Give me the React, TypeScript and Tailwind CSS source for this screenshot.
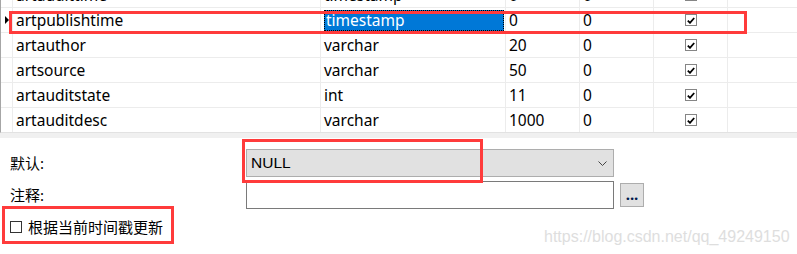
import React from 'react';

type Row = { name: string; type: string; len: string; dec: string; selected?: boolean };

const rows: Row[] = [
  { name: 'artaudittime', type: 'timestamp', len: '0', dec: '0' },
  { name: 'artpublishtime', type: 'timestamp', len: '0', dec: '0', selected: true },
  { name: 'artauthor', type: 'varchar', len: '20', dec: '0' },
  { name: 'artsource', type: 'varchar', len: '50', dec: '0' },
  { name: 'artauditstate', type: 'int', len: '11', dec: '0' },
  { name: 'artauditdesc', type: 'varchar', len: '1000', dec: '0' },
];

const cell = 'h-[25px] border-r border-b border-[#ececec] flex items-center pl-[3px] pt-[2px] overflow-hidden whitespace-nowrap';

const CheckCell = () => (
  <div className="w-[12px] h-[12px] border border-[#858585] bg-white flex items-center justify-center">
    <svg width="8" height="7" viewBox="0 0 8 7">
      <path d="M0.8 3.6 L3 5.8 L7.2 1" stroke="#000" strokeWidth="1.8" fill="none" />
    </svg>
  </div>
);

const App = () => {
  return (
    <div
      className="relative w-[797px] h-[254px] bg-white overflow-hidden text-black"
      style={{ fontFamily: '"Noto Sans", "Noto Sans CJK SC", sans-serif' }}
    >
      {/* field grid */}
      <div className="h-[133px] overflow-hidden border-l border-[#a6a6a6] border-b border-b-[#e2e2e2]">
        <div className="-mt-[17px] grid grid-cols-[12px_308px_185px_74px_74px_74px_1fr] text-[15.5px]">
          {rows.map((r) => (
            <React.Fragment key={r.name}>
              <div className="h-[25px] border-r border-b border-[#ececec] flex items-center pl-[4px]">
                {r.selected && (
                  <svg width="4" height="8" viewBox="0 0 4 8">
                    <path d="M0 0 L4 4 L0 8 Z" fill="#000" />
                  </svg>
                )}
              </div>
              <div className={cell}>{r.name}</div>
              <div className={cell + (r.selected ? ' p-[1px]' : '')}>
                {r.selected ? (
                  <div className="w-full h-full bg-[#0078d7] text-white border border-dotted border-black flex items-center pl-[1px] pt-[1px]">
                    {r.type}
                  </div>
                ) : (
                  r.type
                )}
              </div>
              <div className={cell}>{r.len}</div>
              <div className={cell}>{r.dec}</div>
              <div className="h-[25px] border-r border-b border-[#ececec] flex items-center justify-center">
                <CheckCell />
              </div>
              <div className="h-[25px] border-b border-[#ececec]" />
            </React.Fragment>
          ))}
        </div>
      </div>
      <div className="h-[5px] bg-[#f0f0f0]" />

      {/* properties */}
      <div className="pl-[10px] pt-[11px] flex flex-col text-[15px]">
        <div className="flex items-center h-[28px]">
          <div className="w-[236px]">默认:</div>
          <div className="w-[368px] h-[28px] bg-[#e1e1e1] border border-[#adadad] flex items-center justify-between pl-[4px] pr-[6px]">
            <span className="text-[15.5px]" style={{ fontFamily: '"Liberation Sans", Arial, sans-serif' }}>NULL</span>
            <svg width="9" height="5" viewBox="0 0 9 5">
              <path d="M0.5 0.5 L4.5 4.5 L8.5 0.5" stroke="#444" strokeWidth="1" fill="none" />
            </svg>
          </div>
        </div>
        <div className="flex items-center h-[28px] mt-[4px]">
          <div className="w-[236px]">注释:</div>
          <div className="w-[368px] h-[28px] bg-white border border-[#7a7a7a]" />
          <div className="ml-[6px] w-[24px] h-[24px] bg-[#e1e1e1] border border-[#adadad] flex items-end justify-center pb-[4px]">
            <span className="leading-none text-[15px] font-bold text-[#001a4d]">...</span>
          </div>
        </div>
        <div className="flex items-center h-[20px] mt-[8px] gap-[6px]">
          <div className="w-[12px] h-[12px] border border-[#333] bg-white" />
          <span className="text-[15px] text-[#000]">根据当前时间戳更新</span>
        </div>
      </div>

      {/* annotation boxes */}
      <div className="absolute left-[9px] top-[11px] w-[738px] h-[23px] border-[3px] border-[#ff3b3b]" />
      <div className="absolute left-[242px] top-[139px] w-[241px] h-[44px] border-[3px] border-[#ff3b3b]" />
      <div className="absolute left-[2px] top-[206px] w-[172px] h-[38px] border-[3px] border-[#ff3b3b]" />

      {/* watermark */}
      <div
        className="absolute left-[544px] top-[225px] text-[16px] text-[#dedede] whitespace-nowrap"
        style={{ fontFamily: '"Liberation Sans", Arial, sans-serif' }}
      >
        https://blog.csdn.net/qq_49249150
      </div>
    </div>
  );
};

export default App;
